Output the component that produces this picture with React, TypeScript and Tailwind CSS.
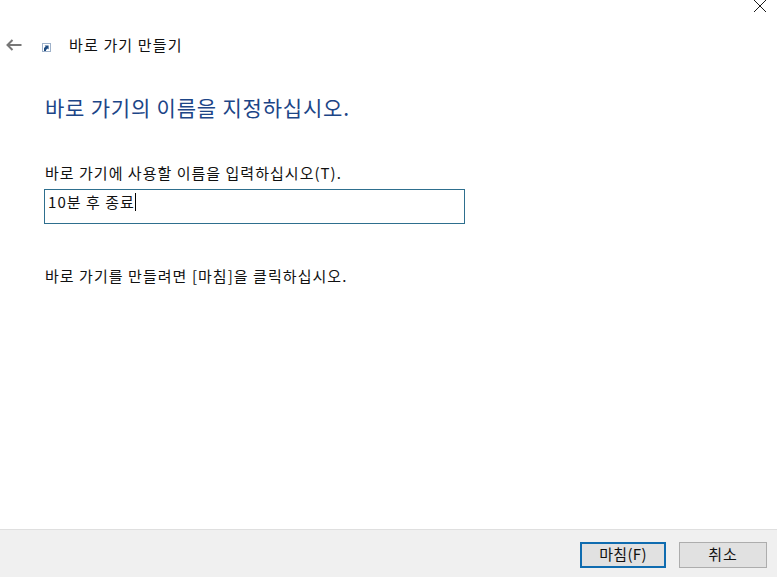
import React from "react";

const font = "font-['Noto_Sans_CJK_KR','Liberation_Sans',sans-serif]";

const ShortcutIcon = () => (
  <svg width="9" height="9" viewBox="0 0 9 9" className="mt-[4px]">
    <rect x="0.5" y="0.5" width="8" height="8" fill="#ffffff" stroke="#9fb2ca" />
    <path d="M2 8V5L3.6 3.4L2.6 2.4H6.6V6.4L5.6 5.4L4 7V8Z" fill="#1d4a80" />
  </svg>
);

const App = () => {
  return (
    <div className={`w-[777px] h-[577px] bg-white flex flex-col overflow-hidden ${font}`}>
      <div className="flex-1 flex flex-col">
        <div className="flex justify-end pr-[10px] h-[35px]">
          <svg width="14" height="14" viewBox="0 0 14 14" className="-mt-px">
            <path d="M1 1L13 13M13 1L1 13" stroke="#1a1a1a" strokeWidth="1" fill="none" />
          </svg>
        </div>

        <div className="flex items-center h-[20px] pl-[6px]">
          <svg width="16" height="12" viewBox="0 0 16 12">
            <path d="M15.5 6H1.5M6.5 1L1.5 6L6.5 11" stroke="#777777" strokeWidth="2" fill="none" />
          </svg>
          <div className="ml-[20px]">
            <ShortcutIcon />
          </div>
          <span className="ml-[18px] text-[15px] leading-[20px] tracking-[1.15px] text-[#111111]">바로 가기 만들기</span>
        </div>

        <div className="pl-[45px] pt-[39px]">
          <h1 className="text-[21px] leading-[26px] tracking-[0.8px] font-normal text-[#1c4587]">바로 가기의 이름을 지정하십시오.</h1>

          <p className="mt-[44px] text-[15px] leading-[18px] tracking-[1.02px] text-[#111111]">
            바로 가기에 사용할 이름을 입력하십시오(T).
          </p>

          <div className="-ml-px mt-[7px] w-[421px] h-[35px] border border-[#2e6f8e] flex items-start pl-[3px] pt-[3px]">
            <span className="text-[15px] leading-[18px] tracking-[1.05px] text-[#111111]">10분 후 종료</span>
            <span className="w-px h-[18px] bg-black" />
          </div>

          <p className="mt-[43px] text-[15px] leading-[18px] tracking-[1.05px] text-[#111111]">
            바로 가기를 만들려면 [마침]을 클릭하십시오.
          </p>
        </div>
      </div>

      <div className="h-[48px] bg-[#f0f0f0] border-t border-[#dfdfdf] flex justify-end items-start pt-[12px] pr-[10px] gap-[13px]">
        <button className="w-[86px] h-[26px] bg-[#e1e1e1] border-2 border-[#0f6cb0] pb-[4px] text-[15px] leading-none tracking-[0.3px] text-[#111111]">
          마침(F)
        </button>
        <button className="w-[88px] h-[26px] bg-[#e1e1e1] border border-[#adadad] pb-[4px] text-[15px] leading-none tracking-[1px] text-[#111111]">
          취소
        </button>
      </div>
    </div>
  );
};

export default App;
